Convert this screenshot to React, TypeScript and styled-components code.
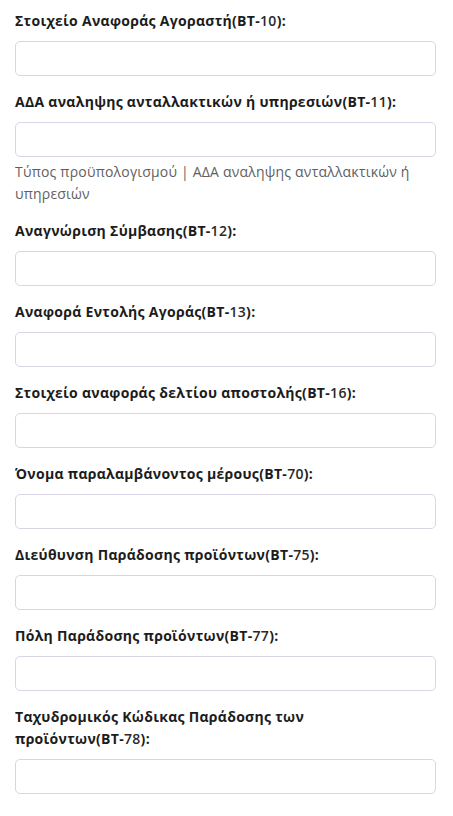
import React from 'react';
import styled, { createGlobalStyle } from 'styled-components';

type Field = {
  label: string;
  code: string;
  help?: string;
};

const fields: Field[] = [
  { label: 'Στοιχείο Αναφοράς Αγοραστή', code: '10' },
  {
    label: 'ΑΔΑ αναληψης ανταλλακτικών ή υπηρεσιών',
    code: '11',
    help: 'Τύπος προϋπολογισμού | ΑΔΑ αναληψης ανταλλακτικών ή υπηρεσιών',
  },
  { label: 'Αναγνώριση Σύμβασης', code: '12' },
  { label: 'Αναφορά Εντολής Αγοράς', code: '13' },
  { label: 'Στοιχείο αναφοράς δελτίου αποστολής', code: '16' },
  { label: 'Όνομα παραλαμβάνοντος μέρους', code: '70' },
  { label: 'Διεύθυνση Παράδοσης προϊόντων', code: '75' },
  { label: 'Πόλη Παράδοσης προϊόντων', code: '77' },
  { label: 'Ταχυδρομικός Κώδικας Παράδοσης των προϊόντων', code: '78' },
];

const App: React.FC = () => {
  return (
    <>
      <GlobalStyle />
      <Form>
        {fields.map((f) => (
          <FieldWrap key={f.code}>
            <Label htmlFor={`bt-${f.code}`}>
              {f.label}
              <Ref>
                (BT-<Code>{f.code}</Code>):
              </Ref>
            </Label>
            <Input id={`bt-${f.code}`} type="text" />
            {f.help && <Help>{f.help}</Help>}
          </FieldWrap>
        ))}
      </Form>
    </>
  );
};

export default App;

const GlobalStyle = createGlobalStyle`
  body {
    margin: 0;
    background: #fff;
    font-family: "Open Sans", "Noto Sans", sans-serif;
  }
`;

const Form = styled.form`
  display: flex;
  flex-direction: column;
  gap: 15px;
  padding: 10px 17px 24px 15px;
`;

const FieldWrap = styled.div`
  display: flex;
  flex-direction: column;
`;

const Label = styled.label`
  font-size: 14px;
  line-height: 22px;
  font-weight: 700;
  letter-spacing: 0.3px;
  color: #1c1c1c;
  margin-bottom: 9px;
  padding-right: 30px;
`;

const Ref = styled.span`
  white-space: nowrap;
`;

const Code = styled.span`
  font-weight: 600;
  color: #2a2a2a;
`;

const Input = styled.input`
  box-sizing: border-box;
  width: 100%;
  height: 35px;
  border: 1px solid #d9d5e6;
  border-radius: 5px;
  background: #fff;
  padding: 0 10px;
  font-size: 14px;
  outline: none;
`;

const Help = styled.p`
  margin: 4px 0 0;
  font-size: 14px;
  letter-spacing: 0.2px;
  line-height: 22px;
  color: #5f5f5f;
`;
